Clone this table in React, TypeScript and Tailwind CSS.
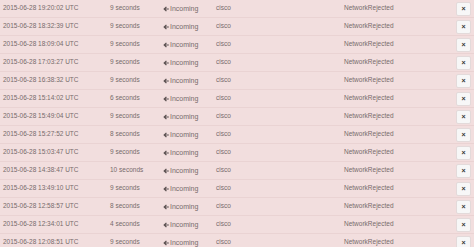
import React from "react";

const rows: [string, string][] = [
  ["2015-06-28 19:20:02 UTC", "9 seconds"],
  ["2015-06-28 18:32:39 UTC", "9 seconds"],
  ["2015-06-28 18:09:04 UTC", "9 seconds"],
  ["2015-06-28 17:03:27 UTC", "9 seconds"],
  ["2015-06-28 16:38:32 UTC", "9 seconds"],
  ["2015-06-28 15:14:02 UTC", "6 seconds"],
  ["2015-06-28 15:49:04 UTC", "9 seconds"],
  ["2015-06-28 15:27:52 UTC", "8 seconds"],
  ["2015-06-28 15:03:47 UTC", "9 seconds"],
  ["2015-06-28 14:38:47 UTC", "10 seconds"],
  ["2015-06-28 13:49:10 UTC", "9 seconds"],
  ["2015-06-28 12:58:57 UTC", "8 seconds"],
  ["2015-06-28 12:34:01 UTC", "4 seconds"],
  ["2015-06-28 12:08:51 UTC", "9 seconds"],
];

function Arrow() {
  return (
    <svg width="6" height="6" viewBox="0 0 6 6" className="mr-[1px]">
      <path d="M0.3 3 L3 0.4 L3.9 1.3 L2.6 2.4 L5.8 2.4 L5.8 3.6 L2.6 3.6 L3.9 4.7 L3 5.6 Z" fill="#5a5050" />
    </svg>
  );
}

export default function App() {
  return (
    <div
      className="w-[474px] h-[247px] overflow-hidden bg-[#f2dede] text-[#776b6b]"
      style={{ fontFamily: '"Liberation Sans", Arial, sans-serif' }}
    >
      <div className="-mt-px">
        {rows.map(([d, s], i) => (
          <div
            key={i}
            className="flex items-center h-[18px] border-t border-[#ead3d3] text-[6.5px] leading-none"
          >
            <div className="w-[110px] pl-[3px]">{d}</div>
            <div className="w-[53px]">{s}</div>
            <div className="w-[53px] flex items-center">
              <Arrow />
              <span className="text-[7px]">Incoming</span>
            </div>
            <div className="w-[128px]">cisco</div>
            <div className="w-[112px]">NetworkRejected</div>
            <div className="w-[15px] h-[14px] bg-[#f7f7f7] border border-[#e3dada] rounded-[2px] flex items-center justify-center">
              <span className="text-[7px] font-bold text-[#333] leading-none">×</span>
            </div>
          </div>
        ))}
      </div>
    </div>
  );
}
